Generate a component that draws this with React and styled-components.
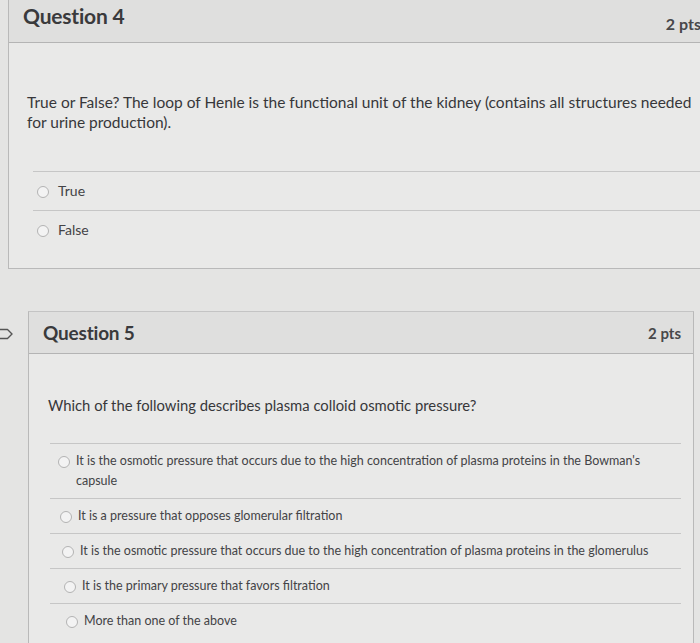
import React from 'react'
import styled, { createGlobalStyle } from 'styled-components'

const GlobalStyle = createGlobalStyle`
  html, body {
    margin: 0;
    padding: 0;
    background: #e4e4e3;
    font-family: Lato, "Open Sans", "Liberation Sans", sans-serif;
    color: #3b3b3d;
    overflow: hidden;
  }
`

const Page = styled.div`
  width: 700px;
  height: 643px;
  overflow: hidden;
  display: flex;
  flex-direction: column;
`

const QuestionRow = styled.div`
  display: flex;
  align-items: flex-start;
  margin-top: ${p => p.top}px;
`

const FlagSlot = styled.div`
  width: ${p => p.width}px;
  flex-shrink: 0;
  padding-top: 17px;
  display: flex;
`

const Card = styled.div`
  width: ${p => p.width}px;
  flex-shrink: 0;
  border: 1px solid #b9b9b9;
  border-top: ${p => (p.cut ? 'none' : '1px solid #c4c4c4')};
  background: #e9e9e8;
`

const Header = styled.div`
  height: ${p => p.height}px;
  display: flex;
  align-items: center;
  justify-content: space-between;
  padding: 0 ${p => p.padRight}px 0 14px;
  background: #dfdfde;
  border-bottom: 1px solid #b4b4b4;
`

const Title = styled.h2`
  margin: 0;
  font-size: ${p => p.size}px;
  font-weight: 700;
  color: #3a3a3c;
  letter-spacing: -0.2px;
  transform: translateY(${p => p.shift}px);
`

const Points = styled.span`
  font-size: ${p => p.size}px;
  font-weight: 700;
  color: #48484a;
  transform: translateY(${p => p.shift}px);
`

const Body = styled.div`
  padding: ${p => p.padTop}px ${p => p.padRight}px ${p => p.padBottom}px ${p => p.padLeft}px;
`

const Prompt = styled.p`
  margin: 0 0 ${p => p.gap}px;
  font-size: ${p => p.size}px;
  line-height: 20px;
  color: #37373a;
`

const Answers = styled.div`
  margin-left: ${p => p.indent}px;
`

const Answer = styled.label`
  display: flex;
  align-items: flex-start;
  gap: ${p => p.gap}px;
  padding: ${p => p.pad}px 0 ${p => p.pad}px ${p => p.inset}px;
  border-top: 1px solid #c6c6c6;
  font-size: ${p => p.size}px;
  line-height: 20px;
  color: #434346;
`

const Radio = styled.span`
  width: 10px;
  height: 10px;
  margin-top: 5px;
  flex-shrink: 0;
  border-radius: 50%;
  border: 1px solid #b3b3b3;
  background: #f3f3f3;
`

const Flag = () => (
  <svg width="14" height="12" viewBox="0 0 14 12">
    <path
      d="M-2 1.5 H7.5 L12 6 L7.5 10.5 H-2"
      fill="none"
      stroke="#555"
      strokeWidth="1.4"
      strokeLinejoin="round"
    />
  </svg>
)

const q4Answers = ['True', 'False']

const q5Answers = [
  "It is the osmotic pressure that occurs due to the high concentration of plasma proteins in the Bowman's capsule",
  'It is a pressure that opposes glomerular filtration',
  'It is the osmotic pressure that occurs due to the high concentration of plasma proteins in the glomerulus',
  'It is the primary pressure that favors filtration',
  'More than one of the above'
]

export default function App () {
  return (
    <Page>
      <GlobalStyle />

      <QuestionRow top={-6}>
        <FlagSlot width={8} />
        <Card width={720} cut>
          <Header height={48} padRight={28}>
            <Title size={21} shift={-3}>Question 4</Title>
            <Points size={16} shift={5}>2 pts</Points>
          </Header>
          <Body padTop={49} padRight={28} padBottom={19} padLeft={18}>
            <Prompt size={15.5} gap={39}>
              True or False? The loop of Henle is the functional unit of the kidney (contains all structures needed for urine production).
            </Prompt>
            <Answers indent={6}>
              {q4Answers.map(a => (
                <Answer key={a} pad={9} inset={4} gap={9} size={14}>
                  <Radio />
                  <span>{a}</span>
                </Answer>
              ))}
            </Answers>
          </Body>
        </Card>
      </QuestionRow>

      <QuestionRow top={42}>
        <FlagSlot width={28}>
          <Flag />
        </FlagSlot>
        <Card width={664}>
          <Header height={41} padRight={12}>
            <Title size={19} shift={0}>Question 5</Title>
            <Points size={15} shift={0}>2 pts</Points>
          </Header>
          <Body padTop={41} padRight={12} padBottom={7} padLeft={19}>
            <Prompt size={14.8} gap={28}>
              Which of the following describes plasma colloid osmotic pressure?
            </Prompt>
            <Answers indent={2}>
              {q5Answers.map((a, i) => (
                <Answer key={i} pad={7} inset={8 + i * 2} gap={6} size={12.5}>
                  <Radio />
                  <span>{a}</span>
                </Answer>
              ))}
            </Answers>
          </Body>
        </Card>
      </QuestionRow>
    </Page>
  )
}
